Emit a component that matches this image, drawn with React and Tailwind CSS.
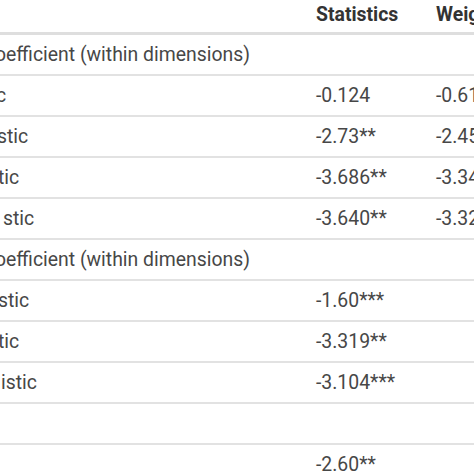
import React from "react";

// table fragment: label column is cut at the left edge, third column at the right edge
const rows = [
  { label: "oefficient (within dimensions)", shift: "ml-[-5px]", group: true },
  { label: "c", shift: "ml-[-4px]", a: "-0.124", b: "-0.61" },
  { label: "stic", shift: "ml-[-3px]", a: "-2.73**", b: "-2.45" },
  { label: "tic", shift: "ml-[-2px]", a: "-3.686**", b: "-3.34" },
  { label: "stic", shift: "ml-[3px]", a: "-3.640**", b: "-3.32" },
  { label: "oefficient (within dimensions)", shift: "ml-[-5px]", group: true },
  { label: "stic", shift: "ml-[-2px]", a: "-1.60***" },
  { label: "tic", shift: "ml-[-2px]", a: "-3.319**" },
  { label: "istic", shift: "ml-[1px]", a: "-3.104***" },
  { label: "", shift: "", a: "" },
  { label: "", shift: "", a: "-2.60**" },
];

function Row({ r }) {
  if (r.group) {
    return (
      <div className="h-[41px] border-b-2 border-[#e2e2e2] flex items-center whitespace-nowrap overflow-hidden">
        <span className={r.shift}>{r.label}</span>
      </div>
    );
  }
  return (
    <div className="h-[41px] border-b-2 border-[#e2e2e2] grid grid-cols-[316px_120px_1fr] items-center whitespace-nowrap">
      <div className="overflow-hidden">
        <span className={`block ${r.shift}`}>{r.label}</span>
      </div>
      <div>{r.a}</div>
      <div>{r.b}</div>
    </div>
  );
}

export default function App() {
  return (
    <div
      className="w-[474px] h-[474px] overflow-hidden bg-white text-[19.4px] text-[#474747]"
      style={{ fontFamily: "Roboto, 'Liberation Sans', sans-serif" }}
    >
      <div className="h-[35px] border-b-[3px] border-[#dedede] grid grid-cols-[316px_120px_1fr] items-center whitespace-nowrap font-bold text-[#333]">
        <div />
        <div className="pb-[8px]">Statistics</div>
        <div className="pb-[8px]">Weighted Statistics</div>
      </div>
      {rows.map((r, i) => (
        <Row key={i} r={r} />
      ))}
    </div>
  );
}
